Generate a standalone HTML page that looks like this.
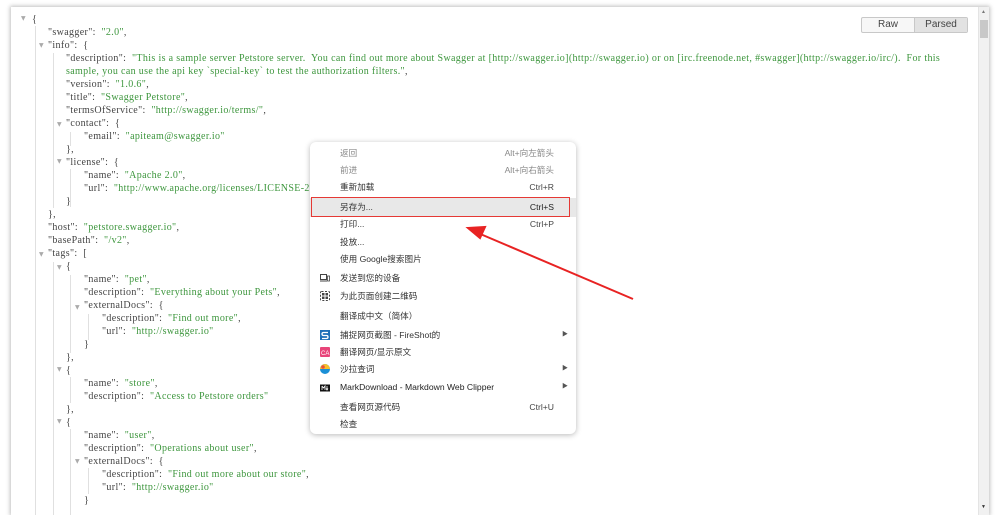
<!DOCTYPE html>
<html><head><meta charset="utf-8"><style>
*{margin:0;padding:0;box-sizing:border-box}
body{width:1000px;height:526px;background:#fff;position:relative;overflow:hidden;font-family:"Liberation Serif","Noto Serif CJK SC",serif}
#win{position:absolute;left:11px;top:7px;width:978px;height:508px;background:#fff;box-shadow:0 0 4px 1px rgba(0,0,0,.25)}
.l{position:absolute;white-space:pre;font-size:10px;letter-spacing:0.35px;line-height:13px;color:#444}
.s{color:#3d963d}
.t{position:absolute;font-size:6px;color:#aaa;font-family:"DejaVu Sans",sans-serif}
.g{position:absolute;width:1px;background:#e0e0e0}
#sb{position:absolute;left:967px;top:0;width:11px;height:508px;background:#f1f1f1;border-left:1px solid #e4e4e4}
#btn{position:absolute;left:850px;top:10px;width:107px;height:16px;border:1px solid #c8c8c8;border-radius:2px;font:10px "Liberation Sans",sans-serif;color:#444;display:flex;background:#f7f7f7}
#btn div{flex:1;text-align:center;line-height:14px}
#menu{position:absolute;left:310px;top:142px;width:266px;height:292px;background:#fff;border-radius:6px;box-shadow:0 1px 6px rgba(0,0,0,.28);font-family:"Liberation Sans","Noto Sans CJK SC",sans-serif;font-size:8.6px;color:#333}
.m{position:absolute;left:30px;white-space:nowrap;line-height:12px}
.k{position:absolute;right:22px;line-height:12px;color:#444}
.dis{color:#888}
.ic{position:absolute;left:10px;width:10px;height:10px}
.ar{position:absolute;right:8px;font-size:6px;color:#555;line-height:12px}
</style></head><body>
<div id="win">
<div id="sb"><div style="position:absolute;left:1px;top:13px;width:8px;height:18px;background:#c8c8c8"></div>
<div style="position:absolute;left:2px;top:3px;font-size:5px;color:#777">▲</div>
<div style="position:absolute;left:2px;top:498px;font-size:5px;color:#333">▼</div></div>
<div id="btn"><div>Raw</div><div style="background:#e2e2e2;border-left:1px solid #c8c8c8">Parsed</div></div>
</div>
<div class="g" style="left:35px;top:26px;height:500px"></div>
<div class="g" style="left:53px;top:53px;height:155px"></div>
<div class="g" style="left:70px;top:132px;height:14px"></div>
<div class="g" style="left:70px;top:169px;height:38px"></div>
<div class="g" style="left:53px;top:262px;height:264px"></div>
<div class="g" style="left:70px;top:275px;height:78px"></div>
<div class="g" style="left:88px;top:314px;height:26px"></div>
<div class="g" style="left:70px;top:377px;height:26px"></div>
<div class="g" style="left:70px;top:429px;height:97px"></div>
<div class="g" style="left:88px;top:468px;height:26px"></div>
<div class="t" style="left:21px;top:15px">▼</div>
<div class="t" style="left:39px;top:42px">▼</div>
<div class="t" style="left:57px;top:121px">▼</div>
<div class="t" style="left:57px;top:158px">▼</div>
<div class="t" style="left:39px;top:251px">▼</div>
<div class="t" style="left:57px;top:264px">▼</div>
<div class="t" style="left:75px;top:304px">▼</div>
<div class="t" style="left:57px;top:366px">▼</div>
<div class="t" style="left:57px;top:418px">▼</div>
<div class="t" style="left:75px;top:458px">▼</div>
<div class="l" style="left:32px;top:13px">{</div>
<div class="l" style="left:48px;top:26px">"swagger":  <span class="s">"2.0"</span>,</div>
<div class="l" style="left:48px;top:39px">"info":  {</div>
<div class="l" style="left:66px;top:52px">"description":  <span class="s">"This is a sample server Petstore server.  You can find out more about Swagger at [http://swagger.io](http://swagger.io) or on [irc.freenode.net, #swagger](http://swagger.io/irc/).  For this</span></div>
<div class="l s" style="left:66px;top:65px">sample, you can use the api key `special-key` to test the authorization filters."<span style="color:#444">,</span></div>
<div class="l" style="left:66px;top:78px">"version":  <span class="s">"1.0.6"</span>,</div>
<div class="l" style="left:66px;top:91px">"title":  <span class="s">"Swagger Petstore"</span>,</div>
<div class="l" style="left:66px;top:104px">"termsOfService":  <span class="s">"http://swagger.io/terms/"</span>,</div>
<div class="l" style="left:66px;top:117px">"contact":  {</div>
<div class="l" style="left:84px;top:130px">"email":  <span class="s">"apiteam@swagger.io"</span></div>
<div class="l" style="left:66px;top:143px">},</div>
<div class="l" style="left:66px;top:156px">"license":  {</div>
<div class="l" style="left:84px;top:169px">"name":  <span class="s">"Apache 2.0"</span>,</div>
<div class="l" style="left:84px;top:182px">"url":  <span class="s">"http://www.apache.org/licenses/LICENSE-2.0.html"</span></div>
<div class="l" style="left:66px;top:195px">}</div>
<div class="l" style="left:48px;top:208px">},</div>
<div class="l" style="left:48px;top:221px">"host":  <span class="s">"petstore.swagger.io"</span>,</div>
<div class="l" style="left:48px;top:234px">"basePath":  <span class="s">"/v2"</span>,</div>
<div class="l" style="left:48px;top:247px">"tags":  [</div>
<div class="l" style="left:66px;top:260px">{</div>
<div class="l" style="left:84px;top:273px">"name":  <span class="s">"pet"</span>,</div>
<div class="l" style="left:84px;top:286px">"description":  <span class="s">"Everything about your Pets"</span>,</div>
<div class="l" style="left:84px;top:299px">"externalDocs":  {</div>
<div class="l" style="left:102px;top:312px">"description":  <span class="s">"Find out more"</span>,</div>
<div class="l" style="left:102px;top:325px">"url":  <span class="s">"http://swagger.io"</span></div>
<div class="l" style="left:84px;top:338px">}</div>
<div class="l" style="left:66px;top:351px">},</div>
<div class="l" style="left:66px;top:364px">{</div>
<div class="l" style="left:84px;top:377px">"name":  <span class="s">"store"</span>,</div>
<div class="l" style="left:84px;top:390px">"description":  <span class="s">"Access to Petstore orders"</span></div>
<div class="l" style="left:66px;top:403px">},</div>
<div class="l" style="left:66px;top:416px">{</div>
<div class="l" style="left:84px;top:429px">"name":  <span class="s">"user"</span>,</div>
<div class="l" style="left:84px;top:442px">"description":  <span class="s">"Operations about user"</span>,</div>
<div class="l" style="left:84px;top:455px">"externalDocs":  {</div>
<div class="l" style="left:102px;top:468px">"description":  <span class="s">"Find out more about our store"</span>,</div>
<div class="l" style="left:102px;top:481px">"url":  <span class="s">"http://swagger.io"</span></div>
<div class="l" style="left:84px;top:494px">}</div>
<div style="position:absolute;left:0;top:515px;width:1000px;height:11px;background:#fff"></div>

<div id="menu">
<div class="m dis" style="top:5px">返回</div><div class="k dis" style="top:5px">Alt+向左箭头</div>
<div class="m dis" style="top:22px">前进</div><div class="k dis" style="top:22px">Alt+向右箭头</div>
<div class="m" style="top:39px">重新加载</div><div class="k" style="top:39px">Ctrl+R</div>
<div style="position:absolute;left:0;top:56px;width:266px;height:19px;background:#e8e8e8"></div>
<div style="position:absolute;left:1px;top:55px;width:259px;height:20px;border:1.5px solid #e53935"></div>
<div class="m" style="top:59px">另存为...</div><div class="k" style="top:59px;color:#222">Ctrl+S</div>
<div class="m" style="top:76px">打印...</div><div class="k" style="top:76px">Ctrl+P</div>
<div class="m" style="top:94px">投放...</div>
<div class="m" style="top:111px">使用 Google搜索图片</div>
<svg class="ic" style="top:131px" viewBox="0 0 10 10"><rect x="0.5" y="1.5" width="6" height="5" fill="none" stroke="#444"/><path d="M0 8h7" stroke="#444"/><rect x="7.5" y="3" width="2" height="5" fill="none" stroke="#444" stroke-width=".8"/></svg>
<div class="m" style="top:130px">发送到您的设备</div>
<svg class="ic" style="top:149px" viewBox="0 0 10 10"><rect x="0.5" y="0.5" width="9" height="9" rx="1" fill="none" stroke="#444" stroke-dasharray="2 1.5"/><rect x="2" y="2" width="2.5" height="2.5" fill="#444"/><rect x="5.5" y="2" width="2.5" height="2.5" fill="#444"/><rect x="2" y="5.5" width="2.5" height="2.5" fill="#444"/><rect x="5.5" y="5.5" width="2.5" height="2.5" fill="#444"/></svg>
<div class="m" style="top:148px">为此页面创建二维码</div>
<div class="m" style="top:168px">翻译成中文（简体）</div>
<svg class="ic" style="top:188px" viewBox="0 0 10 10"><rect width="10" height="10" fill="#1e6fb8"/><path d="M8 2.5H3.5Q2 2.5 2 4T3.5 5.5h3Q8 5.5 8 7T6.5 8.5H2" fill="none" stroke="#fff" stroke-width="1.3"/></svg>
<div class="m" style="top:187px">捕捉网页截图 - FireShot的</div><div class="ar" style="top:187px">▶</div>
<svg class="ic" style="top:205px" viewBox="0 0 10 10"><rect width="10" height="10" rx="1" fill="#e8457a"/><text x="1" y="8" font-size="6" fill="#fff" font-family="Liberation Sans">CA</text></svg>
<div class="m" style="top:204px">翻译网页/显示原文</div>
<svg class="ic" style="top:222px" viewBox="0 0 10 10"><circle cx="5" cy="5" r="5" fill="#1b8fd6"/><path d="M0 5A5 5 0 0 1 10 5Z" fill="#f6c12c"/><circle cx="3" cy="3" r="1.8" fill="#e94f3a"/></svg>
<div class="m" style="top:221px">沙拉查词</div><div class="ar" style="top:221px">▶</div>
<svg class="ic" style="top:241px" viewBox="0 0 10 10"><rect y="1.5" width="10" height="7" fill="#111"/><path d="M2 3v4M2 3l1.5 2L5 3v4M7 3v4M6 5.5l1 1.5 1-1.5" stroke="#fff" stroke-width=".8" fill="none"/></svg>
<div class="m" style="top:239px;color:#222">MarkDownload - Markdown Web Clipper</div><div class="ar" style="top:239px">▶</div>
<div class="m" style="top:259px">查看网页源代码</div><div class="k" style="top:259px">Ctrl+U</div>
<div class="m" style="top:276px">检查</div>
</div>
<svg style="position:absolute;left:0;top:0" width="1000" height="526"><path d="M633 299L478 233" stroke="#e82323" stroke-width="2"/><path d="M468 228L485 227L480 238Z" fill="#e82323" stroke="#e82323" stroke-width="2"/></svg>
</body></html>
